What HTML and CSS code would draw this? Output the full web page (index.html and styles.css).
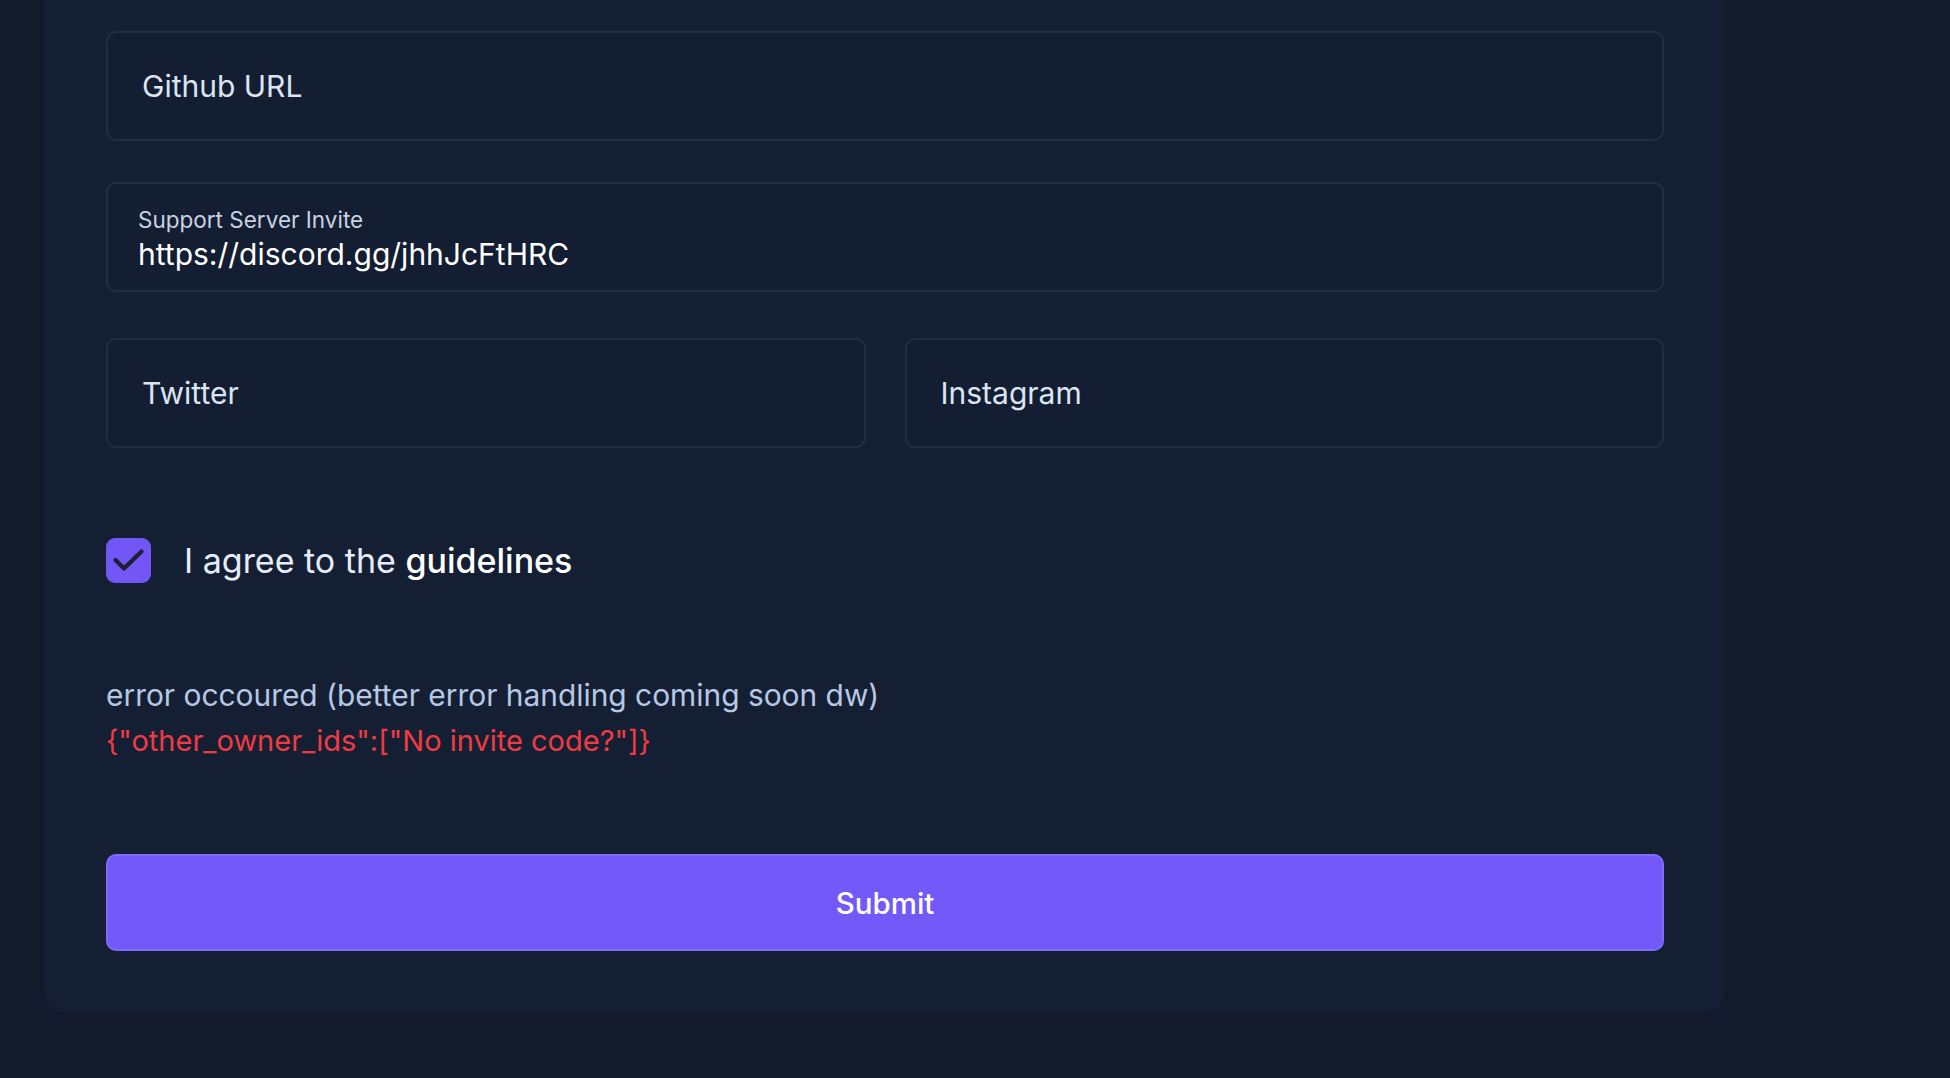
FILE: index.html
```html
<!DOCTYPE html>
<html lang="en">
<head>
<meta charset="utf-8">
<title>Submit bot</title>
<link rel="stylesheet" href="styles.css">
</head>
<body>
<main class="page">
  <form class="card">
    <div class="field">
      <input class="input" type="text" placeholder="Github URL">
    </div>
    <div class="field field-float">
      <label class="float-label">Support Server Invite</label>
      <div class="float-value">https://discord.gg/jhhJcFtHRC</div>
    </div>
    <div class="row">
      <div class="field">
        <input class="input" type="text" placeholder="Twitter">
      </div>
      <div class="field">
        <input class="input" type="text" placeholder="Instagram">
      </div>
    </div>
    <label class="agree">
      <span class="checkbox">
        <svg viewBox="0 0 45 45" width="45" height="45" aria-hidden="true"><path d="M9.5 22L18 30.5L35.5 13.5" fill="none" stroke="#1b2034" stroke-width="4.2" stroke-linecap="round" stroke-linejoin="round"/></svg>
      </span>
      <span class="agree-text">I agree to the <strong class="agree-link">guidelines</strong></span>
    </label>
    <div class="error">
      <p class="error-title">error occoured (better error handling coming soon dw)</p>
      <p class="error-detail">{"other_owner_ids":["No invite code?"]}</p>
    </div>
    <button class="submit" type="button">Submit</button>
  </form>
</main>
</body>
</html>
```
FILE: styles.css
```css
* { box-sizing: border-box; }
html, body {
  margin: 0;
  padding: 0;
  background: #121a2c;
  font-family: Inter, "Noto Sans", sans-serif;
  height: 100%;
  overflow: hidden;
}
.page {
  padding-left: 45px;
}
.card {
  width: 1679px;
  background: #151f33;
  border-radius: 0 0 18px 18px;
  padding: 31px 60px 61px 61px;
  display: flex;
  flex-direction: column;
}
.field {
  height: 110px;
  border: 2px solid #222d45;
  border-radius: 10px;
  background: #141e32;
  display: flex;
  align-items: center;
}
.input {
  width: 100%;
  height: 100%;
  background: transparent;
  border: none;
  outline: none;
  font-family: inherit;
  font-size: 30px;
  color: #ffffff;
  padding: 0 34px;
}
.input::placeholder {
  color: #dde5f3;
  opacity: 1;
}
.field-float {
  margin-top: 41px;
  flex-direction: column;
  align-items: flex-start;
  justify-content: center;
  padding: 0 30px;
}
.float-label {
  font-size: 22.5px;
  color: #c9d2e1;
  line-height: 30px;
  margin-top: 4px;
}
.float-value {
  font-size: 30px;
  color: #ffffff;
  line-height: 38px;
}
.row {
  margin-top: 46px;
  display: grid;
  grid-template-columns: 1fr 1fr;
  gap: 39px;
}
.agree {
  margin-top: 90px;
  display: flex;
  align-items: center;
  gap: 33px;
}
.checkbox {
  width: 45px;
  height: 45px;
  border-radius: 9px;
  background: #7356f6;
  display: flex;
  align-items: center;
  justify-content: center;
  flex-shrink: 0;
}
.checkbox svg { display: block; }
.agree-text {
  font-size: 34px;
  color: #e6edf8;
}
.agree-link {
  font-weight: 500;
  color: #ffffff;
}
.error {
  margin-top: 90px;
}
.error p {
  margin: 0;
  font-size: 29.9px;
  line-height: 45px;
}
.error-title { color: #b6c8e4; }
.error .error-detail { color: #ef3b42; font-size: 29px; }
.submit {
  margin-top: 91px;
  height: 97px;
  width: 100%;
  border: 2px solid #7f6cf8;
  border-radius: 10px;
  background: #7358fa;
  color: #ffffff;
  font-family: inherit;
  font-size: 29.5px;
  font-weight: 500;
}
```
